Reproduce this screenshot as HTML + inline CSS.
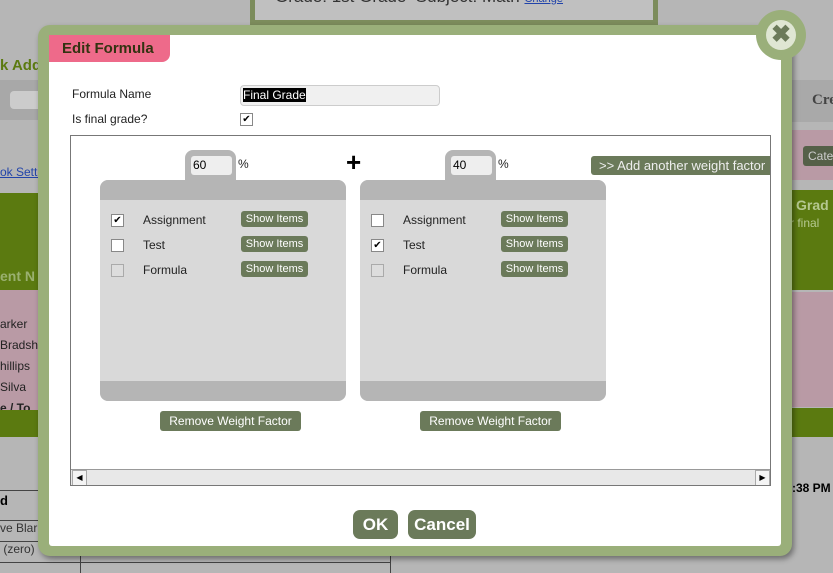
<!DOCTYPE html>
<html><head><style>
html,body{margin:0;width:833px;height:573px;overflow:hidden}
body{background:#b6b6b6;font-family:"Liberation Sans",sans-serif;position:relative}
.a{position:absolute;white-space:nowrap}
.btn{position:absolute;background:#6b7a5a;color:#fff;font-size:11px;border-radius:3px;text-align:center;line-height:16px;height:16px;white-space:nowrap}
.cb{position:absolute;width:11px;height:11px;border:1px solid #888;background:#fff;font-size:10px;line-height:11px;text-align:center}
.lbl{position:absolute;font-size:12px;color:#222;white-space:nowrap}
</style></head><body>
<div class="a" style="left:250px;top:-10px;width:378px;height:30px;border:5px solid #7c8c5c;border-top:none;background:#c0c0c0;font-size:17px;color:#333;padding-left:20px;line-height:14px">Grade: 1st Grade &nbsp;Subject: Math <span style="font-size:11px;color:#2244aa;text-decoration:underline">Change</span></div>
<div class="a" style="left:0;top:57px;font-size:15px;font-weight:bold;color:#5b7a10">k Add</div>
<div class="a" style="left:0;top:80px;width:40px;height:40px;background:#a8a8a8"></div>
<div class="a" style="left:10px;top:91px;width:40px;height:18px;background:#ccc;border-radius:4px"></div>
<div class="a" style="left:0;top:165px;font-size:12px;color:#2244aa;text-decoration:underline">ok Setti</div>
<div class="a" style="left:0;top:193px;width:40px;height:97px;background:#5b7a10"></div>
<div class="a" style="left:0;top:268px;font-size:14px;font-weight:bold;color:#9ab070">ent N</div>
<div class="a" style="left:0;top:290px;width:40px;height:120px;background:#b99aa5"></div>
<div class="a" style="left:0;top:314px;font-size:12px;line-height:21px;color:#222">arker<br>Bradsha<br>hillips<br>Silva<br><b>e / To</b></div>
<div class="a" style="left:0;top:410px;width:40px;height:27px;background:#5b7a10"></div>
<div class="a" style="left:0;top:490px;width:40px;height:83px;border-top:1px solid #444"></div>
<div class="a" style="left:0;top:493px;font-size:13px;font-weight:bold">d</div>
<div class="a" style="left:0;top:520px;font-size:12px;color:#333;border-top:1px solid #444;width:40px">ve Blar</div>
<div class="a" style="left:0;top:541px;font-size:12px;color:#333;border-top:1px solid #444;width:40px">&nbsp;(zero)</div>
<div class="a" style="left:0;top:562px;width:390px;border-top:1px solid #444"></div>
<div class="a" style="left:80px;top:540px;height:40px;border-left:1px solid #444"></div>
<div class="a" style="left:390px;top:546px;height:30px;border-left:1px solid #444"></div>
<div class="a" style="left:790px;top:80px;width:43px;height:42px;background:#a9a9a9"></div>
<div class="a" style="left:812px;top:92px;font-size:15px;font-weight:bold;color:#444;font-family:'Liberation Serif',serif">Cre</div>
<div class="a" style="left:790px;top:130px;width:43px;height:50px;background:#b99aa5"></div>
<div class="a" style="left:803px;top:146px;width:40px;height:20px;background:#556048;border-radius:3px;color:#ccc;font-size:12px;line-height:20px;padding-left:5px">Cate</div>
<div class="a" style="left:790px;top:190px;width:43px;height:100px;background:#5b7a10"></div>
<div class="a" style="left:796px;top:197px;font-size:14px;font-weight:bold;color:#b5c890">Grad</div>
<div class="a" style="left:790px;top:216px;font-size:12px;color:#b5c890">r final</div>
<div class="a" style="left:790px;top:292px;width:43px;height:115px;background:#b99aa5"></div>
<div class="a" style="left:790px;top:408px;width:43px;height:29px;background:#5b7a10"></div>
<div class="a" style="left:792px;top:481px;font-size:12px;font-weight:bold">:38 PM</div>
<!-- modal -->
<div class="a" style="left:38px;top:25px;width:754px;height:531px;background:#9aaf7a;border-radius:12px;box-shadow:2px 3px 6px rgba(0,0,0,.4)"></div>
<div class="a" style="left:49px;top:35px;width:732px;height:511px;background:#fff;border-radius:3px"></div>
<div class="a" style="left:756px;top:10px;width:50px;height:50px;border-radius:50%;background:#9aaf7a"></div>
<div class="a" style="left:766px;top:20px;width:30px;height:30px;border-radius:50%;background:#dfe6d3;color:#6b7a5a;font-size:24px;font-weight:bold;text-align:center;line-height:30px">✖</div>
<div class="a" style="left:49px;top:35px;width:121px;height:27px;background:#ee6a8a;border-radius:0 0 8px 0;font-size:15px;font-weight:bold;color:#331;line-height:28px;padding-left:13px;box-sizing:border-box">Edit Formula</div>
<div class="lbl" style="left:72px;top:87px">Formula Name</div>
<div class="a" style="left:240px;top:85px;width:198px;height:19px;border:1px solid #ccc;border-radius:4px;background:#f0f0f0"></div>
<div class="a" style="left:243px;top:88px;font-size:12px;background:#000;color:#fff;line-height:14px">Final Grade</div>
<div class="lbl" style="left:72px;top:112px">Is final grade?</div>
<div class="cb" style="left:240px;top:113px">✔</div>
<div class="a" style="left:70px;top:135px;width:699px;height:349px;border:1px solid #777;overflow:hidden">
  <div class="a" style="left:0;top:333px;width:699px;height:16px;background:#e8e8e8;border-top:1px solid #999"></div>
  <div class="a" style="left:1px;top:334px;width:13px;height:14px;background:#f4f4f4;border:1px solid #aaa;font-size:8px;line-height:14px;text-align:center">◀</div>
  <div class="a" style="left:684px;top:334px;width:13px;height:14px;background:#f4f4f4;border:1px solid #aaa;font-size:8px;line-height:14px;text-align:center">▶</div>
  <div class="a" style="left:275px;top:14px;font-size:26px;font-weight:bold;line-height:24px">+</div>
  <div class="a" style="left:520px;top:20px;width:185px;height:19px;background:#6b7a5a;color:#eee;font-size:13px;line-height:19px;padding-left:8px;border-radius:3px">&gt;&gt; Add another weight factor</div>
</div>
<div class="a" style="left:185px;top:150px;width:51px;height:35px;background:#b5b5b5;border-radius:8px 8px 0 0"></div>
<div class="a" style="left:191px;top:156px;width:39px;height:19px;background:#eee;border-radius:3px;font-size:12px;line-height:19px;padding-left:2px">60</div>
<div class="lbl" style="left:238px;top:157px">%</div>
<div class="a" style="left:100px;top:180px;width:246px;height:221px;background:#d9d9d9;border-radius:8px;overflow:hidden"><div style="height:20px;background:#b5b5b5"></div><div style="position:absolute;bottom:0;width:100%;height:20px;background:#b5b5b5"></div></div>
<div class="cb" style="left:111px;top:214px">✔</div><div class="lbl" style="left:143px;top:213px">Assignment</div><div class="btn" style="left:241px;top:211px;width:67px">Show Items</div>
<div class="cb" style="left:111px;top:239px"></div><div class="lbl" style="left:143px;top:238px">Test</div><div class="btn" style="left:241px;top:236px;width:67px">Show Items</div>
<div class="cb" style="left:111px;top:264px;background:#ddd;border-color:#aaa"></div><div class="lbl" style="left:143px;top:263px">Formula</div><div class="btn" style="left:241px;top:261px;width:67px">Show Items</div>
<div class="btn" style="left:160px;top:411px;width:141px;height:20px;line-height:20px;font-size:12px">Remove Weight Factor</div>
<div class="a" style="left:445px;top:150px;width:51px;height:35px;background:#b5b5b5;border-radius:8px 8px 0 0"></div>
<div class="a" style="left:451px;top:156px;width:39px;height:19px;background:#eee;border-radius:3px;font-size:12px;line-height:19px;padding-left:2px">40</div>
<div class="lbl" style="left:498px;top:157px">%</div>
<div class="a" style="left:360px;top:180px;width:246px;height:221px;background:#d9d9d9;border-radius:8px;overflow:hidden"><div style="height:20px;background:#b5b5b5"></div><div style="position:absolute;bottom:0;width:100%;height:20px;background:#b5b5b5"></div></div>
<div class="cb" style="left:371px;top:214px"></div><div class="lbl" style="left:403px;top:213px">Assignment</div><div class="btn" style="left:501px;top:211px;width:67px">Show Items</div>
<div class="cb" style="left:371px;top:239px">✔</div><div class="lbl" style="left:403px;top:238px">Test</div><div class="btn" style="left:501px;top:236px;width:67px">Show Items</div>
<div class="cb" style="left:371px;top:264px;background:#ddd;border-color:#aaa"></div><div class="lbl" style="left:403px;top:263px">Formula</div><div class="btn" style="left:501px;top:261px;width:67px">Show Items</div>
<div class="btn" style="left:420px;top:411px;width:141px;height:20px;line-height:20px;font-size:12px">Remove Weight Factor</div>
<div class="btn" style="left:353px;top:510px;width:45px;height:29px;line-height:29px;font-size:17px;font-weight:bold;border-radius:7px">OK</div>
<div class="btn" style="left:408px;top:510px;width:68px;height:29px;line-height:29px;font-size:17px;font-weight:bold;border-radius:7px">Cancel</div>
</body></html>
